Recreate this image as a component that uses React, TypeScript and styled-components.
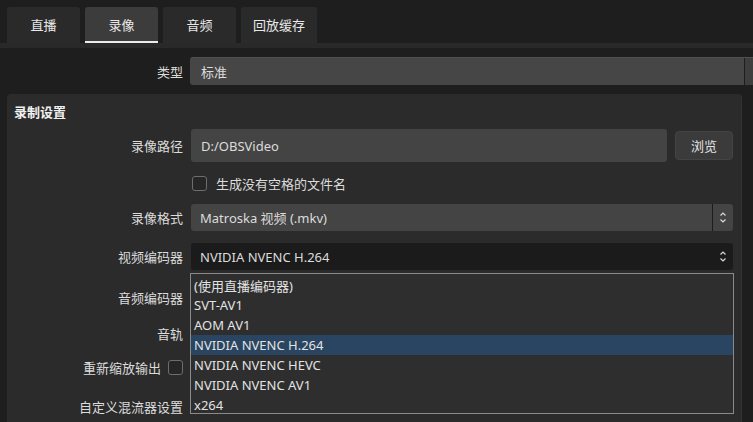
import React from 'react';
import styled, {createGlobalStyle} from 'styled-components';

const Global = createGlobalStyle`
	html, body {
		margin: 0;
		padding: 0;
		background: #1e1e1e;
	}
	body {
		font-family: "Noto Sans", "Noto Sans CJK SC", sans-serif;
		font-size: 13px;
		color: #dcdcdc;
	}
`;

const tabs = ['直播', '录像', '音频', '回放缓存'];
const encoders = [
	'(使用直播编码器)',
	'SVT-AV1',
	'AOM AV1',
	'NVIDIA NVENC H.264',
	'NVIDIA NVENC HEVC',
	'NVIDIA NVENC AV1',
	'x264',
];

const Arrows = () => (
	<svg width="8" height="13" viewBox="0 0 8 13" fill="none" stroke="#d8d8d8" strokeWidth="1.2">
		<path d="M1.5 4.5 L4 2 L6.5 4.5" />
		<path d="M1.5 8.5 L4 11 L6.5 8.5" />
	</svg>
);

const Settings = () => (
	<Page>
		<Global />
		<TabBar>
			{tabs.map((t, i) => (
				<Tab key={t} $active={i === 1}>
					{t}
				</Tab>
			))}
		</TabBar>

		<TypeRow>
			<Label>类型</Label>
			<TypeCombo>
				<span>标准</span>
				<TypeArrowCell />
			</TypeCombo>
		</TypeRow>

		<Group>
			<GroupTitle>录制设置</GroupTitle>

			<Row $h={35}>
				<Label>录像路径</Label>
				<Field>
					<PathInput>D:/OBSVideo</PathInput>
					<Button>浏览</Button>
				</Field>
			</Row>

			<Row $h={40}>
				<Label />
				<CheckLine>
					<Check />
					<span>生成没有空格的文件名</span>
				</CheckLine>
			</Row>

			<Row $h={29}>
				<Label>录像格式</Label>
				<Combo>
					<ComboText>Matroska 视频 (.mkv)</ComboText>
					<ArrowCell $split>
						<Arrows />
					</ArrowCell>
				</Combo>
			</Row>

			<Row $h={29} $gap={10}>
				<Label>视频编码器</Label>
				<Combo $dark>
					<ComboText>NVIDIA NVENC H.264</ComboText>
					<ArrowCell>
						<Arrows />
					</ArrowCell>
				</Combo>
			</Row>

			<Row $h={28} $gap={12}>
				<Label>音频编码器</Label>
			</Row>
			<Row $h={28} $gap={8}>
				<Label>音轨</Label>
			</Row>
			<Row $h={28} $gap={6}>
				<Label>
					重新缩放输出
					<Check />
				</Label>
			</Row>
			<Row $h={28} $gap={11}>
				<Label>自定义混流器设置</Label>
			</Row>
		</Group>

		<DropList>
			{encoders.map((e, i) => (
				<DropItem key={e} $selected={i === 3}>
					{e}
				</DropItem>
			))}
		</DropList>
	</Page>
);

export default function App() {
	return <Settings />;
}

const Page = styled.div`
	position: relative;
	width: 753px;
	height: 422px;
	overflow: hidden;
	background: #1e1e1e;
`;

const TabBar = styled.div`
	display: flex;
	gap: 5px;
	padding: 7px 0 0 7px;
	border-bottom: 5px solid #292929;
`;

const Tab = styled.div<{$active?: boolean}>`
	min-width: 73px;
	padding: 0 12px;
	box-sizing: border-box;
	height: 36px;
	display: flex;
	align-items: center;
	justify-content: center;
	background: ${p => (p.$active ? '#3c3c3c' : '#2a2a2a')};
	border-radius: 3px 3px 0 0;
	border-bottom: 2px solid ${p => (p.$active ? '#ececec' : 'transparent')};
	color: #e8e8e8;
	font-size: 13px;
`;

const Label = styled.div`
	width: 176px;
	flex: none;
	display: flex;
	align-items: center;
	justify-content: flex-end;
	gap: 7px;
	color: #dcdcdc;
	white-space: nowrap;
`;

const TypeRow = styled.div`
	display: flex;
	align-items: center;
	gap: 7px;
	height: 28px;
	margin-top: 9px;
	padding-left: 7px;
`;

const TypeCombo = styled.div`
	flex: none;
	width: 600px;
	height: 28px;
	box-sizing: border-box;
	display: flex;
	align-items: center;
	padding-left: 11px;
	background: #464646;
	border-top: 1px solid #505050;
	border-radius: 3px;
	span {
		flex: 1;
	}
`;

const TypeArrowCell = styled.div`
	width: 45px;
	height: 100%;
	border-left: 1px solid #1e1e1e;
	background: #3e3e3e;
`;

const Group = styled.div`
	margin: 9px 11px 0 7px;
	height: 340px;
	background: #2b2b2b;
	border-radius: 4px;
	border-right: 1px solid #333;
`;

const GroupTitle = styled.div`
	height: 34px;
	box-sizing: border-box;
	padding: 8px 0 0 7px;
	font-weight: 700;
	color: #f0f0f0;
`;

const Row = styled.div<{$h: number; $gap?: number}>`
	display: flex;
	align-items: center;
	gap: 8px;
	height: ${p => p.$h}px;
	margin-top: ${p => p.$gap ?? 0}px;
`;

const Field = styled.div`
	flex: 1;
	display: flex;
	align-items: center;
	gap: 8px;
	padding-right: 8px;
`;

const PathInput = styled.div`
	flex: 1;
	height: 33px;
	display: flex;
	align-items: center;
	padding-left: 10px;
	background: #444444;
	border-radius: 3px;
`;

const Button = styled.div`
	width: 58px;
	height: 29px;
	box-sizing: border-box;
	display: flex;
	align-items: center;
	justify-content: center;
	background: #3b3b3b;
	border: 1px solid #444;
	border-radius: 4px;
	color: #e4e4e4;
`;

const CheckLine = styled.div`
	display: flex;
	align-items: center;
	gap: 9px;
	margin-left: 1px;
`;

const Check = styled.span`
	display: inline-block;
	width: 15px;
	height: 15px;
	box-sizing: border-box;
	border: 1px solid #6e6e6e;
	border-radius: 3px;
	background: #262626;
`;

const Combo = styled.div<{$dark?: boolean}>`
	flex: 1;
	margin-right: 8px;
	height: 27px;
	display: flex;
	align-items: center;
	background: ${p => (p.$dark ? '#1b1b1b' : '#444444')};
	border-radius: 3px;
`;

const ComboText = styled.span`
	flex: 1;
	padding-left: 9px;
`;

const ArrowCell = styled.div<{$split?: boolean}>`
	width: 20px;
	height: 100%;
	display: flex;
	align-items: center;
	justify-content: center;
	border-left: 1px solid ${p => (p.$split ? '#1c1c1c' : 'transparent')};
`;

const DropList = styled.div`
	position: absolute;
	left: 190px;
	top: 273px;
	width: 544px;
	height: 141px;
	box-sizing: border-box;
	padding-top: 1px;
	background: #2e2e2e;
	border: 1px solid #8a8a8a;
`;

const DropItem = styled.div<{$selected?: boolean}>`
	height: 20px;
	display: flex;
	align-items: center;
	padding-left: 3px;
	background: ${p => (p.$selected ? '#294561' : 'transparent')};
	color: #e2e2e2;
`;
